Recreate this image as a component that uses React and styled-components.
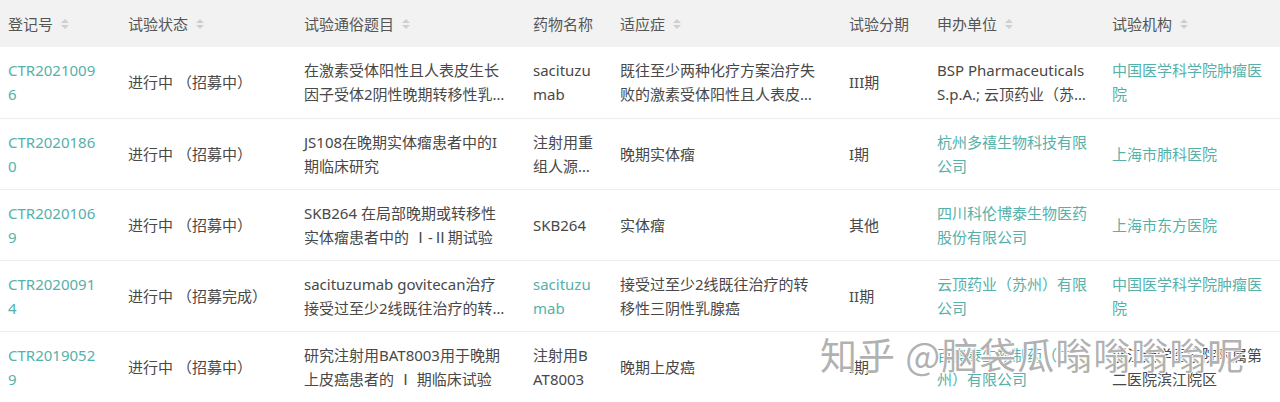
import React from 'react';
import styled, { createGlobalStyle } from 'styled-components';

const GlobalStyle = createGlobalStyle`
  html, body {
    margin: 0;
    padding: 0;
    background: #fff;
  }
  body {
    font-family: "Noto Sans", "Noto Sans CJK SC", sans-serif;
  }
`;

// column widths taken from the header positions
const COLS = [120, 176, 229, 87, 229, 88, 175, 176];

const Wrap = styled.div`
  position: relative;
  width: 1280px;
  height: 402px;
  overflow: hidden;
`;

const Table = styled.table`
  width: 1280px;
  table-layout: fixed;
  border-collapse: collapse;
  font-size: 15px;
  color: #484848;
`;

const HeadCell = styled.th`
  height: 47px;
  padding: 0 8px;
  text-align: left;
  font-weight: normal;
  color: #555;
  background: #f2f2f2;
  white-space: nowrap;
`;

const HeadInner = styled.span`
  display: inline-flex;
  align-items: center;
  gap: 8px;
`;

const Sorter = styled.span`
  display: inline-flex;
  flex-direction: column;
  gap: 2px;

  &::before,
  &::after {
    content: '';
    border-left: 4px solid transparent;
    border-right: 4px solid transparent;
  }
  &::before {
    border-bottom: 4px solid #cfcfcf;
  }
  &::after {
    border-top: 4px solid #cfcfcf;
  }
`;

const Row = styled.tr`
  height: 71px;
  border-bottom: 1px solid #ececec;
`;

const Cell = styled.td`
  padding: 0 8px;
  vertical-align: middle;
  line-height: 24px;
  color: ${(p) => (p.$link ? '#55b1aa' : '#484848')};
`;

const Line = styled.span`
  display: block;
  white-space: nowrap;
`;

const Watermark = styled.div`
  position: absolute;
  left: 820px;
  top: 327px;
  font-family: "Noto Sans CJK SC", sans-serif;
  font-size: 37px;
  letter-spacing: 1px;
  color: rgba(110, 110, 110, 0.55);
  text-shadow:
    1px 0 0 rgba(255, 255, 255, 0.9),
    -1px 0 0 rgba(255, 255, 255, 0.9),
    0 1px 0 rgba(255, 255, 255, 0.9),
    0 -1px 0 rgba(255, 255, 255, 0.9);
  white-space: nowrap;
  pointer-events: none;
`;

const headers = [
  { label: '登记号', sort: true },
  { label: '试验状态', sort: true },
  { label: '试验通俗题目', sort: true },
  { label: '药物名称' },
  { label: '适应症', sort: true },
  { label: '试验分期' },
  { label: '申办单位', sort: true },
  { label: '试验机构', sort: true },
];

// each cell: [lines, isLink]
const rows = [
  [
    [['CTR2021009', '6'], true],
    [['进行中 （招募中）']],
    [['在激素受体阳性且人表皮生长', '因子受体2阴性晚期转移性乳…']],
    [['sacituzu', 'mab']],
    [['既往至少两种化疗方案治疗失', '败的激素受体阳性且人表皮…']],
    [['III期']],
    [['BSP Pharmaceuticals', 'S.p.A.; 云顶药业（苏…']],
    [['中国医学科学院肿瘤医', '院'], true],
  ],
  [
    [['CTR2020186', '0'], true],
    [['进行中 （招募中）']],
    [['JS108在晚期实体瘤患者中的I', '期临床研究']],
    [['注射用重', '组人源…']],
    [['晚期实体瘤']],
    [['I期']],
    [['杭州多禧生物科技有限', '公司'], true],
    [['上海市肺科医院'], true],
  ],
  [
    [['CTR2020106', '9'], true],
    [['进行中 （招募中）']],
    [['SKB264 在局部晚期或转移性', '实体瘤患者中的 Ⅰ-Ⅱ期试验']],
    [['SKB264']],
    [['实体瘤']],
    [['其他']],
    [['四川科伦博泰生物医药', '股份有限公司'], true],
    [['上海市东方医院'], true],
  ],
  [
    [['CTR2020091', '4'], true],
    [['进行中 （招募完成）']],
    [['sacituzumab govitecan治疗', '接受过至少2线既往治疗的转…']],
    [['sacituzu', 'mab'], true],
    [['接受过至少2线既往治疗的转', '移性三阴性乳腺癌']],
    [['II期']],
    [['云顶药业（苏州）有限', '公司'], true],
    [['中国医学科学院肿瘤医', '院'], true],
  ],
  [
    [['CTR2019052', '9'], true],
    [['进行中 （招募中）']],
    [['研究注射用BAT8003用于晚期', '上皮癌患者的 Ⅰ 期临床试验']],
    [['注射用B', 'AT8003']],
    [['晚期上皮癌']],
    [['I期']],
    [['百奥泰生物制药（广', '州）有限公司'], true],
    [['浙江大学医学院附属第', '二医院滨江院区']],
  ],
];

export default function App() {
  return (
    <Wrap>
      <GlobalStyle />
      <Table>
        <colgroup>
          {COLS.map((w, i) => (
            <col key={i} style={{ width: w }} />
          ))}
        </colgroup>
        <thead>
          <tr>
            {headers.map((h) => (
              <HeadCell key={h.label}>
                <HeadInner>
                  {h.label}
                  {h.sort && <Sorter />}
                </HeadInner>
              </HeadCell>
            ))}
          </tr>
        </thead>
        <tbody>
          {rows.map((r, i) => (
            <Row key={i}>
              {r.map(([lines, link], j) => (
                <Cell key={j} $link={link}>
                  {lines.map((l, k) => (
                    <Line key={k}>{l}</Line>
                  ))}
                </Cell>
              ))}
            </Row>
          ))}
        </tbody>
      </Table>
      <Watermark>知乎 @脑袋瓜嗡嗡嗡嗡呢</Watermark>
    </Wrap>
  );
}
